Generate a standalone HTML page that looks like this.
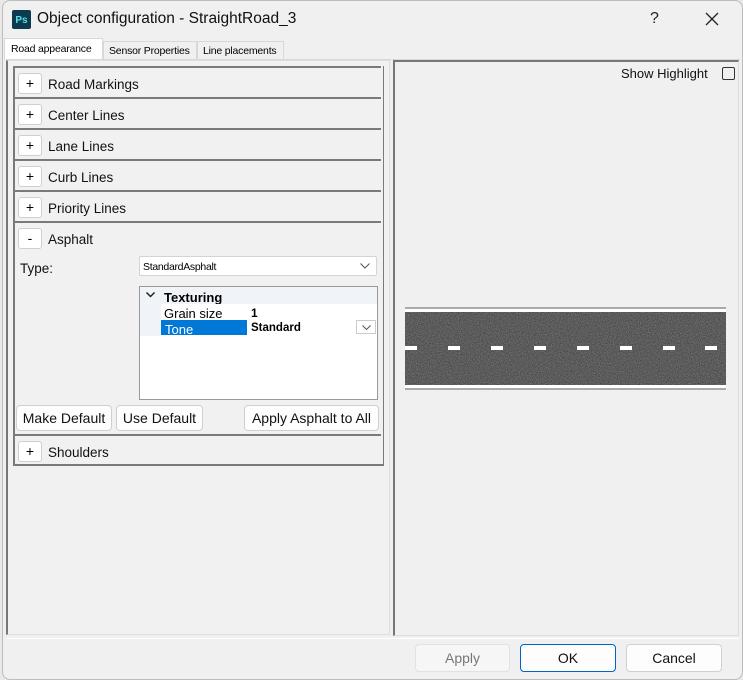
<!DOCTYPE html><html><head><style>
body{margin:0;width:743px;height:680px;background:#e8e8e8;font-family:"Liberation Sans",sans-serif;position:relative;overflow:hidden}
.a{position:absolute;white-space:nowrap}
.win{left:2px;top:0;width:739px;height:678px;background:#f0f0f0;border:1px solid #bdbdbd;border-radius:8px}
.hdr{left:14px;width:367px;height:30px;border-top:2px solid #7a7a7a;}
.pb{position:absolute;left:4px;top:5px;width:22px;height:19px;background:#fff;border:1px solid #cfcfcf;border-radius:3px;font-size:14px;text-align:center;line-height:18px}
.ht{position:absolute;left:34px;top:9px;font-size:13.5px;color:#111}
.btn{background:#fdfdfd;border:1px solid #d0d0d0;border-radius:4px;font-size:14px;text-align:center;color:#111;box-sizing:border-box}
.dash{position:absolute;top:346px;width:12px;height:4px;background:#fff}
.tab{font-size:10.5px;letter-spacing:-0.2px;box-sizing:border-box;border:1px solid #d8d8d8;border-bottom:none}
</style></head><body>
<div class="a win"></div>
<div class="a" style="left:12px;top:10px;width:19px;height:19px;background:#0c3b4f;border-radius:2px;color:#5ce0e6;font-size:10px;font-weight:bold;line-height:22px;text-align:center">Ps</div>
<div class="a" style="left:37px;top:10px;font-size:15.5px;color:#111">Object configuration - StraightRoad_3</div>
<div class="a" style="left:650px;top:10px;font-size:16px;color:#222">?</div>
<svg class="a" style="left:705px;top:12px" width="14" height="14"><path d="M1 1L13 13M13 1L1 13" stroke="#222" stroke-width="1.3"/></svg>
<!-- tabs -->
<div class="a tab" style="left:4px;top:38px;width:99px;height:22px;background:#fff;padding:4px 0 0 6px">Road appearance</div>
<div class="a tab" style="left:103px;top:41px;width:94px;height:18px;padding:3px 0 0 5px">Sensor Properties</div>
<div class="a tab" style="left:197px;top:41px;width:87px;height:18px;padding:3px 0 0 5px">Line placements</div>
<div class="a" style="left:6px;top:59px;width:734px;height:578px;background:#f0f0f0;border-top:1px solid #d8d8d8;border-bottom:1px solid #fff"></div>
<!-- left panel -->
<div class="a" style="left:6px;top:60px;width:381px;height:573px;border:1px solid #ddd;border-left:2px solid #777;background:#f1f1f1"></div>
<div class="a" style="left:13px;top:66px;width:368px;height:398px;border-left:2px solid #7a7a7a;border-right:1px solid #7a7a7a;border-bottom:2px solid #7a7a7a"></div>
<div class="a hdr" style="top:66px"><div class="pb">+</div><div class="ht">Road Markings</div></div>
<div class="a hdr" style="top:97px"><div class="pb">+</div><div class="ht">Center Lines</div></div>
<div class="a hdr" style="top:128px"><div class="pb">+</div><div class="ht">Lane Lines</div></div>
<div class="a hdr" style="top:159px"><div class="pb">+</div><div class="ht">Curb Lines</div></div>
<div class="a hdr" style="top:190px"><div class="pb">+</div><div class="ht">Priority Lines</div></div>
<div class="a hdr" style="top:221px"><div class="pb">-</div><div class="ht">Asphalt</div></div>
<div class="a" style="left:20px;top:261px;font-size:13.5px;color:#111">Type:</div>
<div class="a" style="left:139px;top:256px;width:238px;height:20px;background:#fff;border:1px solid #d4d4d4;border-radius:2px;font-size:10.5px;padding:4px 0 0 3px;box-sizing:border-box;letter-spacing:-0.3px">StandardAsphalt<svg style="position:absolute;right:6px;top:6px" width="10" height="6"><path d="M0.5 0.5L5 5L9.5 0.5" fill="none" stroke="#555"/></svg></div>
<div class="a" style="left:139px;top:286px;width:239px;height:114px;background:#fff;border:1px solid #999;box-sizing:border-box;overflow:hidden">
<div class="a" style="left:0;top:0;width:238px;height:17px;background:#f0f4f8"></div>
<svg class="a" style="left:6px;top:5px" width="9" height="6"><path d="M0.5 0.5L4.5 4.5L8.5 0.5" fill="none" stroke="#222" stroke-width="1.5"/></svg>
<div class="a" style="left:24px;top:3px;font-size:13px;font-weight:bold;height:14px;overflow:hidden;line-height:16px">Texturing</div>
<div class="a" style="left:0;top:17px;width:21px;height:32px;background:#f0f4f8"></div>
<div class="a" style="left:24px;top:19px;font-size:13px;line-height:15px">Grain size</div>
<div class="a" style="left:111px;top:19px;font-size:12px;font-weight:bold;line-height:14px">1</div>
<div class="a" style="left:21px;top:33px;width:86px;height:15px;background:#0078d7;color:#fff;font-size:13px;padding-left:4px;box-sizing:border-box;overflow:hidden;line-height:19px">Tone</div>
<div class="a" style="left:111px;top:35px;font-size:11.5px;font-weight:bold;line-height:13px">Standard</div>
<div class="a" style="left:216px;top:33px;width:20px;height:14px;border:1px solid #ccc;box-sizing:border-box"><svg style="position:absolute;left:5px;top:4px" width="9" height="5"><path d="M0.5 0.5L4.5 4.5L8.5 0.5" fill="none" stroke="#555"/></svg></div>
</div>
<div class="a btn" style="left:16px;top:405px;width:96px;height:26px;line-height:24px">Make Default</div>
<div class="a btn" style="left:116px;top:405px;width:87px;height:26px;line-height:24px">Use Default</div>
<div class="a btn" style="left:244px;top:405px;width:135px;height:26px;line-height:24px">Apply Asphalt to All</div>
<div class="a hdr" style="top:434px"><div class="pb">+</div><div class="ht">Shoulders</div></div>
<!-- right panel -->
<div class="a" style="left:393px;top:60px;width:343px;height:573px;border:1px solid #ddd;border-left:2px solid #777;border-top:2px solid #777;background:#f0f0f0"></div>
<div class="a" style="left:621px;top:66px;font-size:13px;color:#111">Show Highlight</div>
<div class="a" style="left:722px;top:67px;width:11px;height:11px;border:1px solid #333;border-radius:2px"></div>
<div class="a" style="left:405px;top:307px;width:321px;height:2px;background:#aaa"></div>
<svg class="a" style="left:405px;top:309px" width="321" height="79">
<filter id="n"><feTurbulence type="fractalNoise" baseFrequency="0.9" numOctaves="2" seed="3"/><feColorMatrix type="matrix" values="0 0 0 0 0.33  0 0 0 0 0.33  0 0 0 0 0.33  0 0 0 -1.6 1.2"/></filter>
<rect width="321" height="79" fill="#484848"/>
<rect width="321" height="79" filter="url(#n)" opacity="0.6"/>
<rect width="321" height="3" fill="#fff"/><rect y="76" width="321" height="3" fill="#fff"/>
</svg>
<div class="a" style="left:405px;top:388px;width:321px;height:2px;background:#aaa"></div>
<div class="dash" style="left:405px"></div><div class="dash" style="left:448px"></div><div class="dash" style="left:491px"></div><div class="dash" style="left:534px"></div><div class="dash" style="left:577px"></div><div class="dash" style="left:620px"></div><div class="dash" style="left:663px"></div><div class="dash" style="left:705px"></div>
<!-- bottom -->
<div class="a btn" style="left:415px;top:644px;width:95px;height:28px;line-height:27px;color:#777;background:#f6f6f6;border-color:#e2e2e2">Apply</div>
<div class="a btn" style="left:520px;top:644px;width:96px;height:28px;line-height:26px;border-color:#0067c0">OK</div>
<div class="a btn" style="left:626px;top:644px;width:96px;height:28px;line-height:26px">Cancel</div>
</body></html>
